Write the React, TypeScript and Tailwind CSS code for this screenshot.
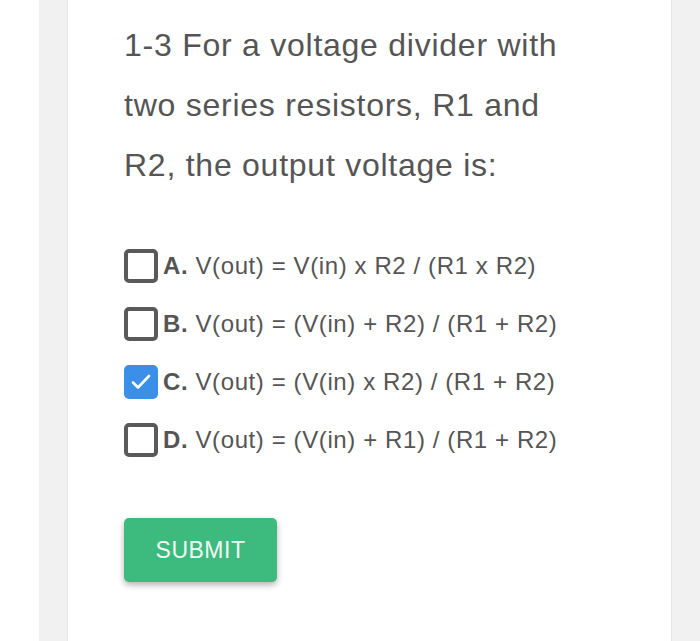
import { useState } from "react";

type Option = { key: string; label: string };

const OPTIONS: Option[] = [
  { key: "A", label: "V(out) = V(in) x R2 / (R1 x R2)" },
  { key: "B", label: "V(out) = (V(in) + R2) / (R1 + R2)" },
  { key: "C", label: "V(out) = (V(in) x R2) / (R1 + R2)" },
  { key: "D", label: "V(out) = (V(in) + R1) / (R1 + R2)" },
];

function Check({ checked }: { checked: boolean }) {
  if (checked) {
    return (
      <span className="flex h-[34px] w-[34px] shrink-0 items-center justify-center rounded-[5px] bg-[#3b8fe8]">
        <svg width="24" height="24" viewBox="0 0 24 24" fill="none">
          <path d="M4 12.5l5 5L20 6" stroke="white" strokeWidth="2.6" strokeLinecap="round" strokeLinejoin="round" />
        </svg>
      </span>
    );
  }
  return <span className="h-[34px] w-[34px] shrink-0 rounded-[5px] border-[4px] border-[#5a5a5a] bg-white" />;
}

export default function App() {
  const [picked, setPicked] = useState<string[]>(["C"]);

  const toggle = (key: string) =>
    setPicked((prev) => (prev.includes(key) ? prev.filter((k) => k !== key) : [...prev, key]));

  return (
    <div className="flex h-[641px] bg-white pl-[39px] font-['Liberation_Sans',Arial,sans-serif] text-[#555]">
      <div className="flex flex-1 bg-[#f1f1f1] px-[28px]">
        <main className="flex-1 border-x border-[#e6e6e6] bg-white pl-[56px] pt-[15px]">
          <h1 className="w-[455px] text-[32px] leading-[60px] tracking-[0.75px]">
            1-3 For a voltage divider with two series resistors, R1 and R2, the output voltage is:
          </h1>
          <div className="mt-[42px]">
            {OPTIONS.map((opt) => (
              <label
                key={opt.key}
                onClick={() => toggle(opt.key)}
                className="flex h-[58px] cursor-pointer items-center gap-[5px] text-[24px] tracking-[0.6px]"
              >
                <Check checked={picked.includes(opt.key)} />
                <span>
                  <b>{opt.key}.</b> {opt.label}
                </span>
              </label>
            ))}
          </div>
          <button
            type="button"
            className="mt-[49px] h-[64px] w-[153px] rounded-[5px] bg-[#3dba7d] text-[23px] tracking-[0.5px] text-[#f2fbf6] shadow-[0_3px_6px_rgba(0,0,0,0.3)]"
          >
            SUBMIT
          </button>
        </main>
      </div>
    </div>
  );
}
